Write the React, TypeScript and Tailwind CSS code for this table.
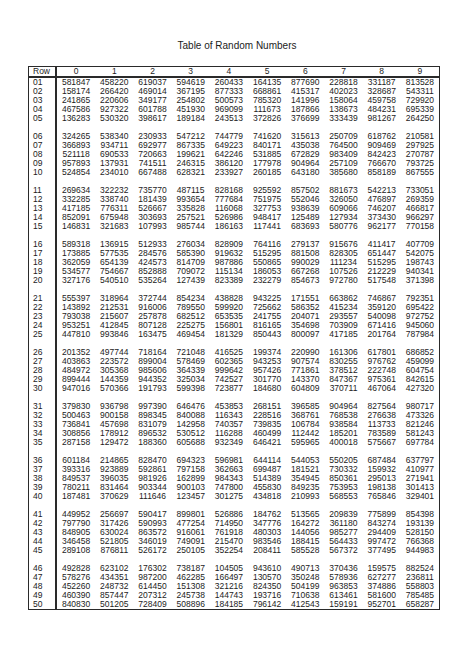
import React from 'react';

const DATA = `
581847 458220 619037 594619 260433 164135 877690 228818 331187 813528
158174 266420 469014 367195 877333 668861 415317 402023 328687 543311
241865 220606 349177 254802 500573 785320 141996 158064 459758 729920
467586 927322 601788 451930 969099 111673 187866 138673 484231 695339
136283 530320 398617 189184 243513 372826 376699 333439 981267 264250
324265 538340 230933 547212 744779 741620 315613 250709 618762 210581
366893 934711 692977 867335 649223 840171 435038 764500 909469 297925
521118 690533 720663 199621 642246 531885 672829 983409 842423 270787
957893 137931 741511 246315 386120 177978 904964 257109 766670 793725
524854 234010 667488 628321 233927 260185 643180 385680 858189 867555
269634 322232 735770 487115 828168 925592 857502 881673 542213 733051
332285 338740 181439 993654 777684 751975 552046 326050 476897 269359
417185 776311 526667 335828 116068 327753 938639 609066 746207 466817
852091 675948 303693 257521 526986 948417 125489 127934 373430 966297
146831 321683 107993 985744 186163 117441 683693 580776 962177 770158
589318 136915 512933 276034 828909 764116 279137 915676 411417 407709
173885 577535 284576 585390 919632 515295 881508 828305 651447 542075
362059 654139 424573 814709 987886 550865 990029 111234 515295 198743
534577 754667 852888 709072 115134 186053 667268 107526 212229 940341
327176 540510 535264 127439 823389 232279 854673 972780 517548 371398
555397 318964 372744 854234 438828 943225 171551 663862 746867 792351
143892 212531 916006 789550 599920 725662 586352 415234 359120 695422
793038 215607 257878 682512 653535 241755 204071 293557 540098 972752
953251 412845 807128 225275 156801 816165 354698 703909 671416 945060
447810 993846 163475 469454 181329 850443 800097 417185 201764 787984
201352 497744 718164 721048 416525 199374 220990 161306 617801 686852
403863 223572 899004 578469 602365 943253 907574 830255 976762 459099
484972 305368 985606 364339 999642 957426 771861 378512 222748 604754
899444 144359 944352 325034 742527 301770 143370 847367 975361 842615
947016 570366 191793 599398 723877 184680 604809 370711 467064 427320
379830 936798 997390 646476 453853 268151 396585 904964 827564 980717
500463 900158 898345 840088 116343 228516 368761 768538 276638 473326
736841 457698 831079 142958 740357 739835 106784 938584 113733 821246
308856 178912 896532 530512 116288 460499 112442 185201 783589 581243
287158 129472 188360 605688 932349 646421 595965 400018 575667 697784
601184 214865 828470 694323 596981 644114 544053 550205 687484 637797
393316 923889 592861 797158 362663 699487 181521 730332 159932 410977
849537 396035 981926 162899 984343 514389 354945 850361 295013 271941
780211 831464 903344 900103 747800 455830 849235 753953 198138 301413
187481 370629 111646 123457 301275 434818 210993 568553 765846 329401
449952 256697 590417 899801 526886 184762 513565 209839 775899 854398
797790 317426 590993 477254 714950 347776 164272 361180 843274 193139
848905 630024 863572 916061 761918 480303 144056 985277 294409 528150
346458 521805 346019 749091 215470 983546 188415 564433 997472 766368
289108 876811 526172 250105 352254 208411 585528 567372 377495 944983
492828 623102 176302 738187 104505 943610 490713 370436 159575 882524
578276 434351 987200 462285 166497 130570 350248 578936 627277 236811
452260 248732 614450 151308 321216 824350 504199 963853 374886 558803
460390 857447 207312 245738 144743 193716 710638 613461 581600 785485
840830 501205 728409 508896 184185 796142 412543 159191 952701 658287
`
  .trim()
  .split('\n')
  .map(line => line.trim().split(/\s+/));

const rowGrid = 'grid grid-cols-[28px_repeat(10,minmax(0,1fr))]';

export default function App() {
  const blocks: string[][][] = [];
  for (let i = 0; i < DATA.length; i += 5) blocks.push(DATA.slice(i, i + 5));

  return (
    <div className="min-h-[670px] w-[474px] bg-white pt-[40px] text-[#1c1c1c] font-['Liberation_Sans',Arial,sans-serif]">
      <h1 className="text-center text-[10px] leading-[12px] font-normal">Table of Random Numbers</h1>

      <div className="ml-[28px] mt-[14px] w-[412px] border border-[#2a2a2a] text-[8.5px] leading-[9px]">
        <div className={`${rowGrid} h-[11px] border-b-2 border-[#2a2a2a]`}>
          <div className="border-r-2 border-[#2a2a2a] pl-[4px]">Row</div>
          {Array.from({ length: 10 }, (_, c) => (
            <div key={c} className="text-center">{c}</div>
          ))}
        </div>

        {blocks.map((block, b) => (
          <div key={b}>
            {b > 0 && (
              <div className={`${rowGrid} h-[9px]`}>
                <div className="border-r-2 border-[#2a2a2a]" />
              </div>
            )}
            {block.map((row, r) => {
              const n = b * 5 + r + 1;
              return (
                <div key={n} className={`${rowGrid} h-[9px]`}>
                  <div className="border-r-2 border-[#2a2a2a] pl-[4px]">{String(n).padStart(2, '0')}</div>
                  {row.map((v, c) => (
                    <div key={c} className="text-center">{v}</div>
                  ))}
                </div>
              );
            })}
          </div>
        ))}
      </div>
    </div>
  );
}
